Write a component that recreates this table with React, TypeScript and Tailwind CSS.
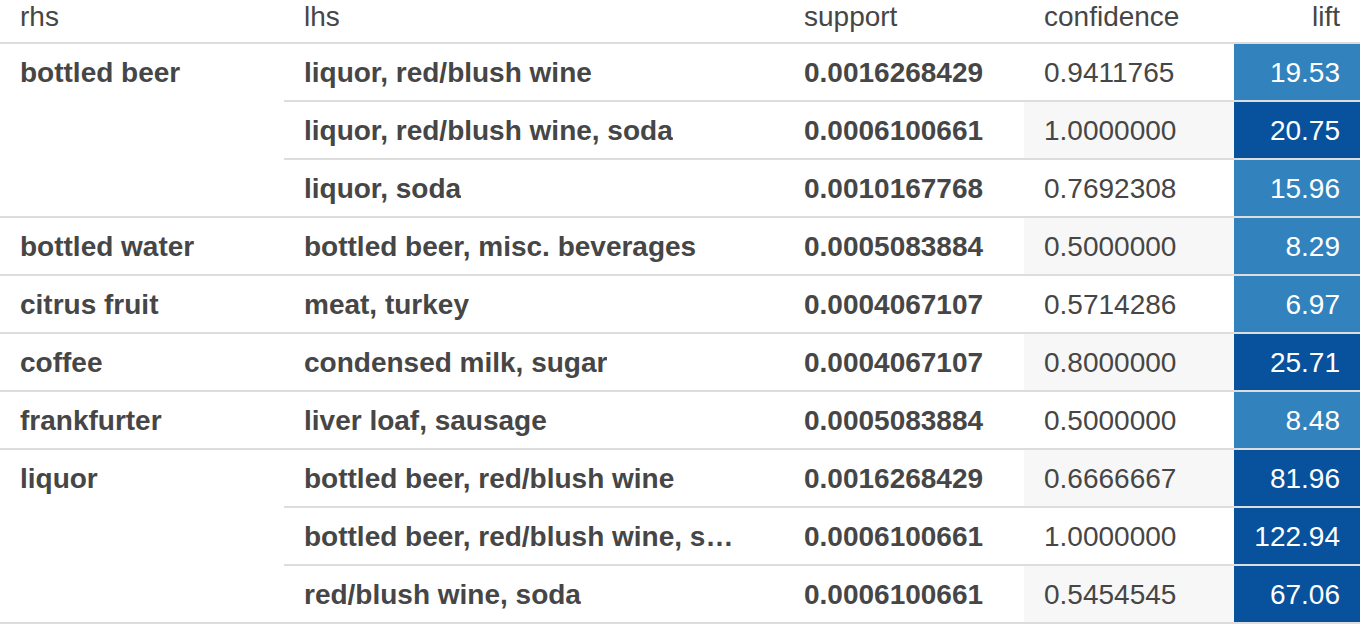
type Rule = {
  lhs: string;
  support: string;
  confidence: string;
  lift: number;
};

type Group = {
  rhs: string;
  rules: Rule[];
};

const groups: Group[] = [
  {
    rhs: "bottled beer",
    rules: [
      { lhs: "liquor, red/blush wine", support: "0.0016268429", confidence: "0.9411765", lift: 19.53 },
      { lhs: "liquor, red/blush wine, soda", support: "0.0006100661", confidence: "1.0000000", lift: 20.75 },
      { lhs: "liquor, soda", support: "0.0010167768", confidence: "0.7692308", lift: 15.96 },
    ],
  },
  {
    rhs: "bottled water",
    rules: [
      { lhs: "bottled beer, misc. beverages", support: "0.0005083884", confidence: "0.5000000", lift: 8.29 },
    ],
  },
  {
    rhs: "citrus fruit",
    rules: [{ lhs: "meat, turkey", support: "0.0004067107", confidence: "0.5714286", lift: 6.97 }],
  },
  {
    rhs: "coffee",
    rules: [{ lhs: "condensed milk, sugar", support: "0.0004067107", confidence: "0.8000000", lift: 25.71 }],
  },
  {
    rhs: "frankfurter",
    rules: [{ lhs: "liver loaf, sausage", support: "0.0005083884", confidence: "0.5000000", lift: 8.48 }],
  },
  {
    rhs: "liquor",
    rules: [
      { lhs: "bottled beer, red/blush wine", support: "0.0016268429", confidence: "0.6666667", lift: 81.96 },
      { lhs: "bottled beer, red/blush wine, soda", support: "0.0006100661", confidence: "1.0000000", lift: 122.94 },
      { lhs: "red/blush wine, soda", support: "0.0006100661", confidence: "0.5454545", lift: 67.06 },
    ],
  },
];

const rowSpan: Record<number, string> = {
  1: "row-span-1",
  3: "row-span-3",
};

export default function App() {
  let rowIndex = 0;

  return (
    <div className="w-[1362px] h-[624px] bg-white overflow-hidden font-['Liberation_Sans',Arial,sans-serif] text-[28px] leading-[32px] text-[#464646]">
      <div className="grid w-[1360px] grid-cols-[284px_500px_240px_210px_126px] grid-rows-[44px_repeat(10,58px)]">
        {/* header */}
        <div className="flex items-end pb-[9px] pl-[20px] border-b-2 border-[#ddd]">rhs</div>
        <div className="flex items-end pb-[9px] pl-[20px] border-b-2 border-[#ddd]">lhs</div>
        <div className="flex items-end pb-[9px] pl-[20px] border-b-2 border-[#ddd]">support</div>
        <div className="flex items-end pb-[9px] pl-[20px] border-b-2 border-[#ddd]">confidence</div>
        <div className="flex items-end justify-end pb-[9px] pr-[20px] border-b-2 border-[#ddd]">lift</div>

        {groups.map((g) =>
          g.rules.map((r, i) => {
            rowIndex += 1;
            const striped = rowIndex % 2 === 0;
            const dark = r.lift > 20;
            return [
              i === 0 && (
                <div
                  key={g.rhs + "-rhs"}
                  className={`${rowSpan[g.rules.length]} border-b-2 border-[#ddd] pl-[20px] font-bold`}
                >
                  <div className="h-[56px] pt-[2px] flex items-center">{g.rhs}</div>
                </div>
              ),
              <div key={r.lhs + rowIndex + "l"} className="flex items-center pt-[2px] pl-[20px] border-b-2 border-[#ddd] font-bold min-w-0">
                <span className="truncate max-w-[440px]">{r.lhs}</span>
              </div>,
              <div key={r.lhs + rowIndex + "s"} className="flex items-center pt-[2px] pl-[20px] border-b-2 border-[#ddd] font-bold">
                {r.support}
              </div>,
              <div
                key={r.lhs + rowIndex + "c"}
                className={`flex items-center pt-[2px] pl-[20px] border-b-2 border-[#ddd] ${striped ? "bg-[#f7f7f7]" : "bg-white"}`}
              >
                {r.confidence}
              </div>,
              <div
                key={r.lhs + rowIndex + "x"}
                className={`flex items-center justify-end pt-[2px] pr-[20px] border-b-2 border-[#ddd] text-white ${dark ? "bg-[#08519c]" : "bg-[#3182bd]"}`}
              >
                {r.lift.toFixed(2)}
              </div>,
            ];
          })
        )}
      </div>
    </div>
  );
}
